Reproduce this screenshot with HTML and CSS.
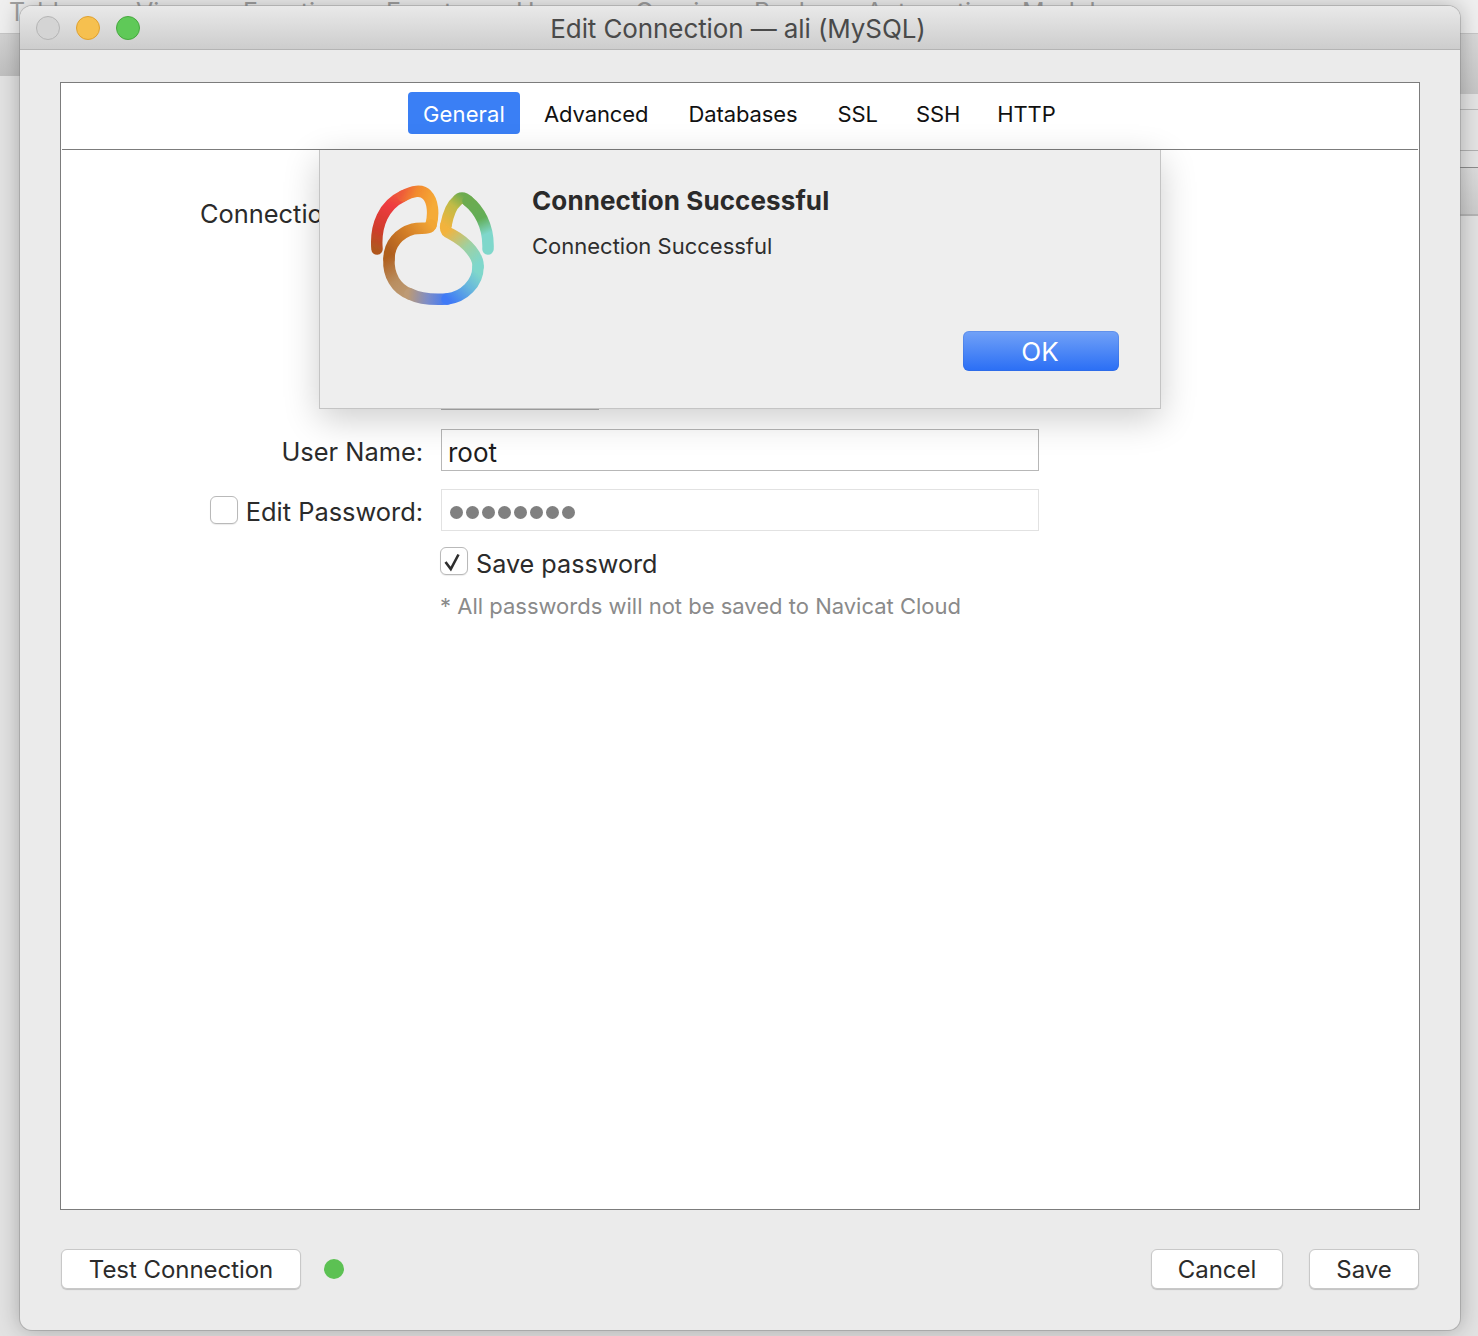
FILE: index.html
```html
<!DOCTYPE html>
<html lang="en">
<head>
<meta charset="utf-8">
<title>Edit Connection</title>
<link rel="stylesheet" href="styles.css">
</head>
<body>
<div class="desktop">
  <div class="app-toolbar">
    <span>Tables</span><span>Views</span><span>Functions</span><span>Events</span><span>Users</span><span>Queries</span><span>Backups</span><span>Automation</span><span>Models</span>
  </div>
  <div class="strip strip-left"></div>
  <div class="strip strip-right"></div>
  <div class="strip-rule"></div>
  <div class="window-shadow"></div>

  <section class="window">
    <header class="titlebar">
      <div class="lights">
        <span class="light light-off"></span>
        <span class="light light-min"></span>
        <span class="light light-max"></span>
      </div>
      <h1 class="title">Edit Connection — ali (MySQL)</h1>
    </header>
    <div class="window-body">
      <div class="panel">
        <nav class="tabs">
          <span class="tab tab-active">General</span>
          <span class="tab tab-advanced">Advanced</span>
          <span class="tab tab-databases">Databases</span>
          <span class="tab tab-ssl">SSL</span>
          <span class="tab tab-ssh">SSH</span>
          <span class="tab tab-http">HTTP</span>
        </nav>
        <div class="form">
          <div class="hidden-row">Connection Name:</div>
          <div class="field-stub"></div>
          <div class="row row-user">
            <span class="label">User Name:</span>
            <div class="input">root</div>
          </div>
          <div class="row row-pass">
            <span class="label"><span class="check"></span>Edit Password:</span>
            <div class="input input-off"><span class="dots"><i></i><i></i><i></i><i></i><i></i><i></i><i></i><i></i></span></div>
          </div>
          <div class="row row-save">
            <span class="label"></span>
            <span class="save"><span class="check check-on"><svg viewBox="1 1 26 26" width="26" height="26"><path d="M5.5 15 10.8 22 18.5 7.5" fill="none" stroke="#2e2e2e" stroke-width="2.6"/></svg></span>Save password</span>
          </div>
          <div class="row row-note">
            <span class="label"></span>
            <span class="note">* All passwords will not be saved to Navicat Cloud</span>
          </div>
        </div>

        <div class="alert">
          <svg class="logo" viewBox="0 0 180 170" width="180" height="170" aria-label="Navicat logo">
            <defs>
              <linearGradient id="g1" gradientUnits="userSpaceOnUse" x1="37" y1="90" x2="62" y2="36">
                <stop offset="0" stop-color="#b0571f"/><stop offset=".3" stop-color="#cf3c2b"/><stop offset=".75" stop-color="#ee3a40"/><stop offset="1" stop-color="#ee5a3a"/>
              </linearGradient>
              <linearGradient id="g2" gradientUnits="userSpaceOnUse" x1="60" y1="38" x2="92" y2="50">
                <stop offset="0" stop-color="#ee5a3a"/><stop offset=".4" stop-color="#f28a2e"/><stop offset="1" stop-color="#f5ab37"/>
              </linearGradient>
              <linearGradient id="g3" gradientUnits="userSpaceOnUse" x1="92" y1="66" x2="52" y2="95">
                <stop offset="0" stop-color="#f2a635"/><stop offset=".5" stop-color="#d47f28"/><stop offset="1" stop-color="#b0601f"/>
              </linearGradient>
              <linearGradient id="g4" gradientUnits="userSpaceOnUse" x1="48" y1="98" x2="72" y2="135">
                <stop offset="0" stop-color="#b0601f"/><stop offset=".55" stop-color="#b98e60"/><stop offset="1" stop-color="#bd9a74"/>
              </linearGradient>
              <linearGradient id="g5" gradientUnits="userSpaceOnUse" x1="68" y1="134" x2="108" y2="140">
                <stop offset="0" stop-color="#bd9a74"/><stop offset=".5" stop-color="#7c8cc8"/><stop offset="1" stop-color="#3f7af6"/>
              </linearGradient>
              <linearGradient id="g6" gradientUnits="userSpaceOnUse" x1="108" y1="140" x2="136" y2="112">
                <stop offset="0" stop-color="#3f7af6"/><stop offset=".6" stop-color="#68b8dc"/><stop offset="1" stop-color="#7fd7cb"/>
              </linearGradient>
              <linearGradient id="g7" gradientUnits="userSpaceOnUse" x1="137" y1="105" x2="107" y2="72">
                <stop offset="0" stop-color="#7fd7cb"/><stop offset=".45" stop-color="#9fd0a0"/><stop offset="1" stop-color="#f2b33e"/>
              </linearGradient>
              <linearGradient id="g8" gradientUnits="userSpaceOnUse" x1="106" y1="68" x2="128" y2="40">
                <stop offset="0" stop-color="#f2b33e"/><stop offset=".6" stop-color="#c0bb46"/><stop offset="1" stop-color="#6cab50"/>
              </linearGradient>
              <linearGradient id="g9" gradientUnits="userSpaceOnUse" x1="128" y1="42" x2="147" y2="85">
                <stop offset="0" stop-color="#6cab50"/><stop offset=".45" stop-color="#62ae56"/><stop offset=".8" stop-color="#7fd7cb"/><stop offset="1" stop-color="#7fd7cb"/>
              </linearGradient>
              <filter id="soft" x="-5%" y="-5%" width="110%" height="110%"><feGaussianBlur stdDeviation=".5"/></filter>
            </defs>
            <g class="logo-strokes" filter="url(#soft)">
              <path stroke="url(#g1)" d="M37 90C35 66 44 46 63 37"/>
              <path stroke="url(#g2)" d="M63 37C72 32 82 30 87 36C93 42 94 55 91 66"/>
              <path stroke="url(#g3)" d="M91 66C89 71 81 68 73 70C59 74 49 85 49 100"/>
              <path stroke="url(#g4)" d="M49 100C48 116 56 130 70 135"/>
              <path stroke="url(#g5)" d="M70 135C80 140 92 141 107 140"/>
              <path stroke="url(#g6)" d="M107 140C124 138 138 124 138 108"/>
              <path stroke="url(#g7)" d="M138 108C139 98 128 84 111 75C106 73 105 70 106 66"/>
              <path stroke="url(#g8)" d="M106 66C108 56 112 46 117 42C120 38 124 38 128 42"/>
              <path stroke="url(#g9)" d="M128 42C138 50 149 66 148 90"/>
            </g>
          </svg>
          <div class="alert-text">
            <h2 class="alert-title">Connection Successful</h2>
            <p class="alert-msg">Connection Successful</p>
          </div>
          <button class="ok" type="button">OK</button>
        </div>
      </div>
      <footer class="footer">
        <button class="btn btn-test" type="button">Test Connection</button>
        <span class="status"></span>
        <button class="btn btn-cancel" type="button">Cancel</button>
        <button class="btn btn-save" type="button">Save</button>
      </footer>
    </div>
  </section>
</div>
</body>
</html>
```
FILE: styles.css
```css
* { box-sizing: border-box; }
html, body { margin: 0; padding: 0; }
body {
  width: 1478px;
  height: 1336px;
  overflow: hidden;
  font-family: Inter, "Liberation Sans", sans-serif;
  color: #2b2b2b;
  background: #e2e2e2;
}
.desktop { position: relative; width: 1478px; height: 1336px; overflow: hidden; background: #e2e2e2; }
.app-toolbar {
  position: absolute; left: 0; top: 0; right: 0; height: 34px;
  display: grid;
  grid-template-columns: 127px 107px 143px 130px 119px 119px 112px 156px 1fr;
  padding-left: 9px;
  background: #efefef;
  border-bottom: 1px solid #c6c6c6;
  font-size: 25px; line-height: 24px; color: #a0a0a0;
}
.strip { position: absolute; }
.strip-left { left: 0; top: 34px; width: 20px; height: 42px; background: linear-gradient(#d2d2d2, #c0c0c0); }
.strip-right { right: 0; top: 34px; width: 18px; height: 60px; background: linear-gradient(#d8d8d8, #c6c6c6); }
.strip-rule { position: absolute; right: 0; top: 94px; width: 18px; height: 122px; background:
  linear-gradient(#b8b8b8, #b8b8b8) 0 15px / 100% 1px no-repeat,
  linear-gradient(#b0b0b0, #b0b0b0) 0 56px / 100% 1px no-repeat,
  linear-gradient(#8c8c8c, #8c8c8c) 0 73px / 100% 1px no-repeat,
  linear-gradient(#b4b4b4, #b4b4b4) 0 120px / 100% 2px no-repeat,
  linear-gradient(#dcdcdc, #cccccc) 0 74px / 100% 46px no-repeat,
  #e4e4e4; }
.window-shadow { position: absolute; left: 20px; top: 6px; width: 1440px; height: 1324px; border-radius: 12px; box-shadow: 0 0 22px rgba(0,0,0,.28); }
.window {
  position: absolute; left: 20px; top: 6px;
  width: 1440px; height: 1324px;
  border-radius: 12px;
  overflow: hidden;
  background: #ebebeb;
  box-shadow: 0 0 0 1px rgba(120,120,120,.35);
  display: flex; flex-direction: column;
}
.titlebar {
  position: relative; height: 44px; flex: none;
  background: linear-gradient(#e9e9e9, #cdcdcd);
  border-bottom: 1px solid #b4b4b4;
  display: flex; align-items: center; justify-content: center;
}
.lights { position: absolute; left: 16px; top: 10px; display: flex; gap: 16px; }
.light { width: 24px; height: 24px; border-radius: 50%; border: 1px solid; }
.light-off { background: #d4d4d4; border-color: #b4b4b4; }
.light-min { background: #f6c04f; border-color: #dfa02f; }
.light-max { background: #5fc958; border-color: #47a83f; }
.title { margin: 0; padding-top: 2px; font-size: 26px; font-weight: 400; color: #4a4a4a; line-height: 44px; position: relative; left: -2px; letter-spacing: -.1px; }
.window-body { flex: 1; display: flex; flex-direction: column; padding: 32px 40px 40px; }

.panel {
  position: relative; height: 1128px; flex: none;
  background: #fff;
  border: 1px solid #7c7c7c;
}
.tabs {
  height: 67px; border-bottom: 1px solid #7c7c7c;
  display: flex; align-items: center;
  padding-left: 346px; padding-bottom: 6px;
  font-size: 22px; color: #111;
  margin-left: 1px; margin-right: 1px;
}
.tab { line-height: 42px; padding-top: 2px; white-space: nowrap; letter-spacing: -.1px; }
.tab-active { width: 112px; height: 42px; padding-top: 1px; text-align: center; background: #3a7ff5; color: #fff; border-radius: 4px; letter-spacing: .15px; }
.tab-advanced { margin-left: 24px; }
.tab-databases { margin-left: 40px; }
.tab-ssl { margin-left: 40px; }
.tab-ssh { margin-left: 38px; }
.tab-http { margin-left: 37px; }

.form { position: relative; padding-top: 39px; font-size: 25.4px; }
.hidden-row { height: 50px; padding-left: 139px; line-height: 50px; white-space: nowrap; }
.field-stub { margin: 158px 0 0 380px; width: 158px; height: 13px; border: 1px solid #b4b4b4; border-top: 0; background: #f3f3f3; }
.row { display: flex; align-items: center; }
.label { width: 362px; padding-top: 2px; text-align: right; flex: none; display: block; white-space: nowrap; }
.input {
  width: 598px; height: 42px; margin-left: 18px;
  border: 1px solid #b7b7b7; background: #fff;
  padding-left: 6px; font-size: 26px; line-height: 46px; color: #1d1d1d;
}
.input-off { border-color: #e2e2e2; display: flex; align-items: center; padding: 4px 0 0 8px; }
.dots { display: flex; gap: 3px; }
.dots i { width: 13px; height: 13px; border-radius: 50%; background: #808080; }
.row-user { margin-top: 19px; }
.row-pass { margin-top: 18px; }
.check {
  display: inline-flex; align-items: center; justify-content: center;
  width: 28px; height: 28px; border: 1px solid #b9b9b9; border-radius: 6px;
  background: #fff; margin-right: 8px; vertical-align: -3px;
  box-shadow: 0 1px 1px rgba(0,0,0,.08);
}
.row-save { margin-top: 16px; height: 32px; }
.save { margin-left: 17px; padding-top: 2px; display: flex; align-items: center; white-space: nowrap; font-size: 25.2px; }
.check-on { margin-top: -6px; }
.row-note { margin-top: 12px; height: 30px; }
.note { margin-left: 17px; font-size: 22px; color: #8a8a8a; white-space: nowrap; }

.alert {
  position: absolute; left: 258px; top: 67px;
  width: 842px; height: 259px;
  background: #eeeeee;
  border: 1px solid #c4c4c4; border-top: 0;
  box-shadow: 0 10px 34px rgba(0,0,0,.2);
  display: block;
}
.logo { position: absolute; left: 20px; top: 9px; }
.logo-strokes path { fill: none; stroke-width: 11.5; stroke-linecap: round; stroke-linejoin: round; }
.alert-text { position: absolute; left: 212px; top: 33px; }
.alert-title { margin: 0; font-size: 26px; line-height: 36px; font-weight: 700; color: #2a2a2a; white-space: nowrap; letter-spacing: .1px; }
.alert-msg { margin: 12px 0 0; font-size: 22px; line-height: 30px; color: #2e2e2e; white-space: nowrap; }
.ok {
  position: absolute; left: 643px; top: 181px;
  width: 156px; height: 40px; padding: 2px 2px 0 0;
  border: 0; border-radius: 6px;
  background: linear-gradient(#72a2f7, #2a6ef5);
  box-shadow: inset 0 0 0 1px rgba(50,100,200,.25);
  color: #fff; font: 400 26px/38px Inter, "Liberation Sans", sans-serif;
}

.footer { display: flex; align-items: center; padding: 39px 1px 0; }
.btn {
  height: 40px; padding: 2px 0 0;
  border: 1px solid #c8c8c8; border-radius: 6px;
  background: #fff;
  box-shadow: 0 1px 1px rgba(0,0,0,.18);
  color: #2b2b2b; font: 400 24px/36px Inter, "Liberation Sans", sans-serif;
  letter-spacing: -.05px;
}
.btn-test { width: 240px; }
.status { width: 20px; height: 20px; margin-left: 23px; border-radius: 50%; background: #5cc153; }
.btn-cancel { width: 132px; margin-left: auto; }
.btn-save { width: 110px; margin-left: 26px; }
```
